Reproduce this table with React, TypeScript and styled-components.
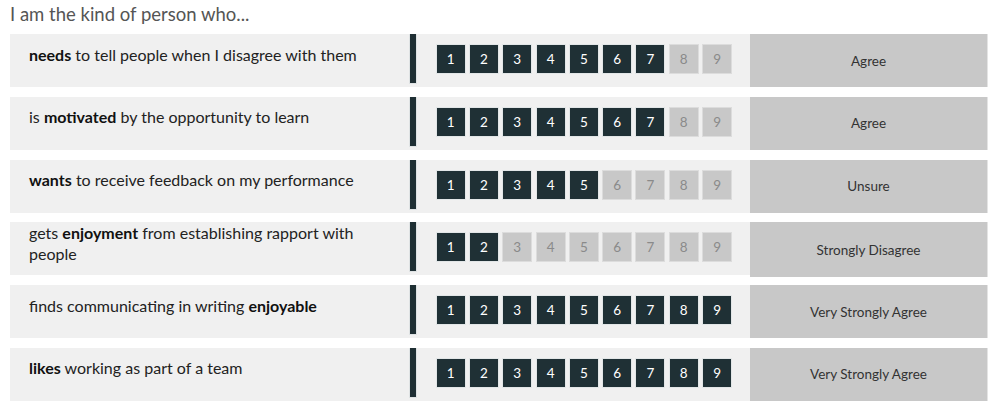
import React from "react";
import styled, { createGlobalStyle } from "styled-components";

const Global = createGlobalStyle`
  html, body { margin: 0; padding: 0; background: #ffffff; }
  body { font-family: Lato, "Noto Sans", sans-serif; color: #222; }
`;

const Page = styled.div`
  padding: 0 12px 0 10px;
  width: 978px;
`;

const Heading = styled.h1`
  margin: 0;
  height: 34px;
  font-size: 18.5px;
  font-weight: 400;
  line-height: 28px;
  color: #555;
`;

const List = styled.div`
  display: flex;
  flex-direction: column;
  gap: 9.8px;
`;

const Row = styled.div`
  display: grid;
  grid-template-columns: 399px 8px 333px 238px;
  height: 53px;
  background: #f0f0f0;
`;

const Statement = styled.div`
  display: flex;
  align-items: center;
  padding: 0 22px 13px 19px;
  font-size: 16px;
  line-height: 21px;
  color: #222;
`;

const Word = styled.span<{ $bold?: boolean }>`
  font-weight: ${(p) => (p.$bold ? 700 : 400)};
  color: ${(p) => (p.$bold ? "#111" : "#222")};
`;

const Divider = styled.div`
  height: 50px;
  background: #1f2f34;
  border: 1px solid #dfe3e4;
  border-top: none;
  box-sizing: border-box;
`;

const Scale = styled.div`
  display: flex;
  align-items: center;
  height: 50px;
  padding-left: 18.7px;
  gap: 3.3px;
`;

const Box = styled.div<{ $on: boolean }>`
  width: 30px;
  height: 30px;
  box-sizing: border-box;
  border: 1px solid ${(p) => (p.$on ? "#e2e6e7" : "#dcdcdc")};
  background: ${(p) => (p.$on ? "#1f3035" : "#c8c8c8")};
  color: ${(p) => (p.$on ? "#ffffff" : "#8a8a8a")};
  display: flex;
  align-items: center;
  justify-content: center;
  font-size: 13.5px;
`;

const Answer = styled.div`
  display: flex;
  align-items: center;
  justify-content: center;
  background: #c8c8c8;
  border-right: 1px solid #e4e4e4;
  font-size: 13.5px;
  color: #333;
`;

type Item = { text: string; bold: string; value: number; label: string };

const items: Item[] = [
  { text: "needs to tell people when I disagree with them", bold: "needs", value: 7, label: "Agree" },
  { text: "is motivated by the opportunity to learn", bold: "motivated", value: 7, label: "Agree" },
  { text: "wants to receive feedback on my performance", bold: "wants", value: 5, label: "Unsure" },
  { text: "gets enjoyment from establishing rapport with people", bold: "enjoyment", value: 2, label: "Strongly Disagree" },
  { text: "finds communicating in writing enjoyable", bold: "enjoyable", value: 9, label: "Very Strongly Agree" },
  { text: "likes working as part of a team", bold: "likes", value: 9, label: "Very Strongly Agree" },
];

export default function App() {
  return (
    <Page>
      <Global />
      <Heading>I am the kind of person who...</Heading>
      <List>
        {items.map((it, i) => (
          <Row key={i}>
            <Statement>
              <span>
                {it.text.split(" ").map((w, j) => (
                  <React.Fragment key={j}>
                    {j > 0 ? " " : null}
                    <Word $bold={w === it.bold}>{w}</Word>
                  </React.Fragment>
                ))}
              </span>
            </Statement>
            <Divider />
            <Scale>
              {[1, 2, 3, 4, 5, 6, 7, 8, 9].map((n) => (
                <Box key={n} $on={n <= it.value}>
                  {n}
                </Box>
              ))}
            </Scale>
            <Answer>{it.label}</Answer>
          </Row>
        ))}
      </List>
    </Page>
  );
}
